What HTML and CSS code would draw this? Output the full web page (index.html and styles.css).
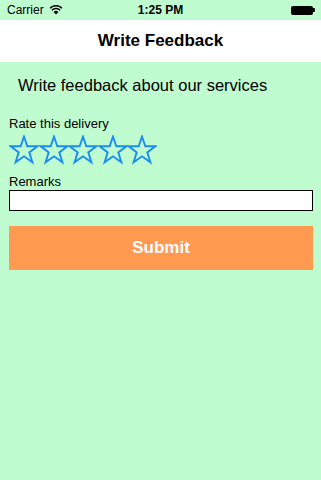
FILE: index.html
```html
<!DOCTYPE html>
<html lang="en">

<head>
    <meta charset="UTF-8">
    <meta name="viewport" content="width=device-width, initial-scale=1.0">
    <title>Write Feedback</title>
    <link rel="stylesheet" href="styles.css">
</head>

<body>
    <div class="status-bar">
        <div class="status-left">
            <span>Carrier</span>
            <svg class="wifi" width="14" height="10" viewBox="0 0 14 10">
                <path d="M7 9.5 L4.6 7 A3.4 3.4 0 0 1 9.4 7 Z" fill="#000" />
                <path d="M2.9 5.3 A5.8 5.8 0 0 1 11.1 5.3" stroke="#000" stroke-width="1.5" fill="none" />
                <path d="M1 3.2 A8.5 8.5 0 0 1 13 3.2" stroke="#000" stroke-width="1.5" fill="none" />
            </svg>
        </div>
        <div class="status-time">1:25 PM</div>
        <div class="status-right">
            <div class="battery"></div>
            <div class="battery-nub"></div>
        </div>
    </div>

    <div class="nav-bar">Write Feedback</div>

    <div class="content">
        <h2 class="intro">Write feedback about our services</h2>

        <div class="field-label">Rate this delivery</div>
        <div class="stars">
            <svg class="star" viewBox="0 0 30 30"><path d="M15 1.5 L18.3 11.2 L28.5 11.2 L20.3 17.4 L23.4 27.3 L15 21.3 L6.6 27.3 L9.7 17.4 L1.5 11.2 L11.7 11.2 Z" /></svg>
            <svg class="star" viewBox="0 0 30 30"><path d="M15 1.5 L18.3 11.2 L28.5 11.2 L20.3 17.4 L23.4 27.3 L15 21.3 L6.6 27.3 L9.7 17.4 L1.5 11.2 L11.7 11.2 Z" /></svg>
            <svg class="star" viewBox="0 0 30 30"><path d="M15 1.5 L18.3 11.2 L28.5 11.2 L20.3 17.4 L23.4 27.3 L15 21.3 L6.6 27.3 L9.7 17.4 L1.5 11.2 L11.7 11.2 Z" /></svg>
            <svg class="star" viewBox="0 0 30 30"><path d="M15 1.5 L18.3 11.2 L28.5 11.2 L20.3 17.4 L23.4 27.3 L15 21.3 L6.6 27.3 L9.7 17.4 L1.5 11.2 L11.7 11.2 Z" /></svg>
            <svg class="star" viewBox="0 0 30 30"><path d="M15 1.5 L18.3 11.2 L28.5 11.2 L20.3 17.4 L23.4 27.3 L15 21.3 L6.6 27.3 L9.7 17.4 L1.5 11.2 L11.7 11.2 Z" /></svg>
        </div>

        <div class="field-label remarks-label">Remarks</div>
        <input type="text" class="remarks-input">

        <button class="submit-btn">Submit</button>
    </div>
</body>

</html>
```

FILE: styles.css
```css
* {
    box-sizing: border-box;
    margin: 0;
    padding: 0;
}

body {
    font-family: 'Liberation Sans', Arial, sans-serif;
    background: #bffcd0;
    color: #000;
    width: 321px;
    min-height: 480px;
}

.status-bar {
    height: 20px;
    display: flex;
    align-items: center;
    justify-content: space-between;
    padding: 0 6px 0 7px;
    font-size: 12px;
    position: relative;
}

.status-left {
    display: flex;
    align-items: center;
    gap: 5px;
}

.status-time {
    position: absolute;
    left: 0;
    right: 0;
    text-align: center;
    font-weight: bold;
}

.status-right {
    display: flex;
    align-items: center;
}

.battery {
    width: 22px;
    height: 9px;
    background: #000;
    border-radius: 2px;
}

.battery-nub {
    width: 2px;
    height: 4px;
    background: #000;
    border-radius: 0 1px 1px 0;
}

.nav-bar {
    height: 42px;
    background: #fff;
    display: flex;
    align-items: center;
    justify-content: center;
    font-size: 17px;
    font-weight: bold;
}

.content {
    padding: 14px 8px 0 9px;
}

.intro {
    font-size: 16.5px;
    font-weight: normal;
    padding-left: 9px;
    margin-bottom: 21px;
}

.field-label {
    font-size: 13px;
    margin-bottom: 4px;
}

.stars {
    display: flex;
    margin-bottom: 9px;
}

.star {
    width: 30px;
    height: 30px;
    margin-right: -0.4px;
}

.star path {
    fill: none;
    stroke: #1a8cf5;
    stroke-width: 1.9;
}

.remarks-label {
    margin-bottom: 1px;
}

.remarks-input {
    display: block;
    width: 304px;
    height: 21px;
    border: 1px solid #000;
    background: #fff;
    margin-bottom: 15px;
}

.submit-btn {
    display: block;
    width: 304px;
    height: 44px;
    border: none;
    background: #ff9a50;
    color: #fff;
    font-family: 'Liberation Sans', Arial, sans-serif;
    font-size: 17px;
    font-weight: bold;
}
```
